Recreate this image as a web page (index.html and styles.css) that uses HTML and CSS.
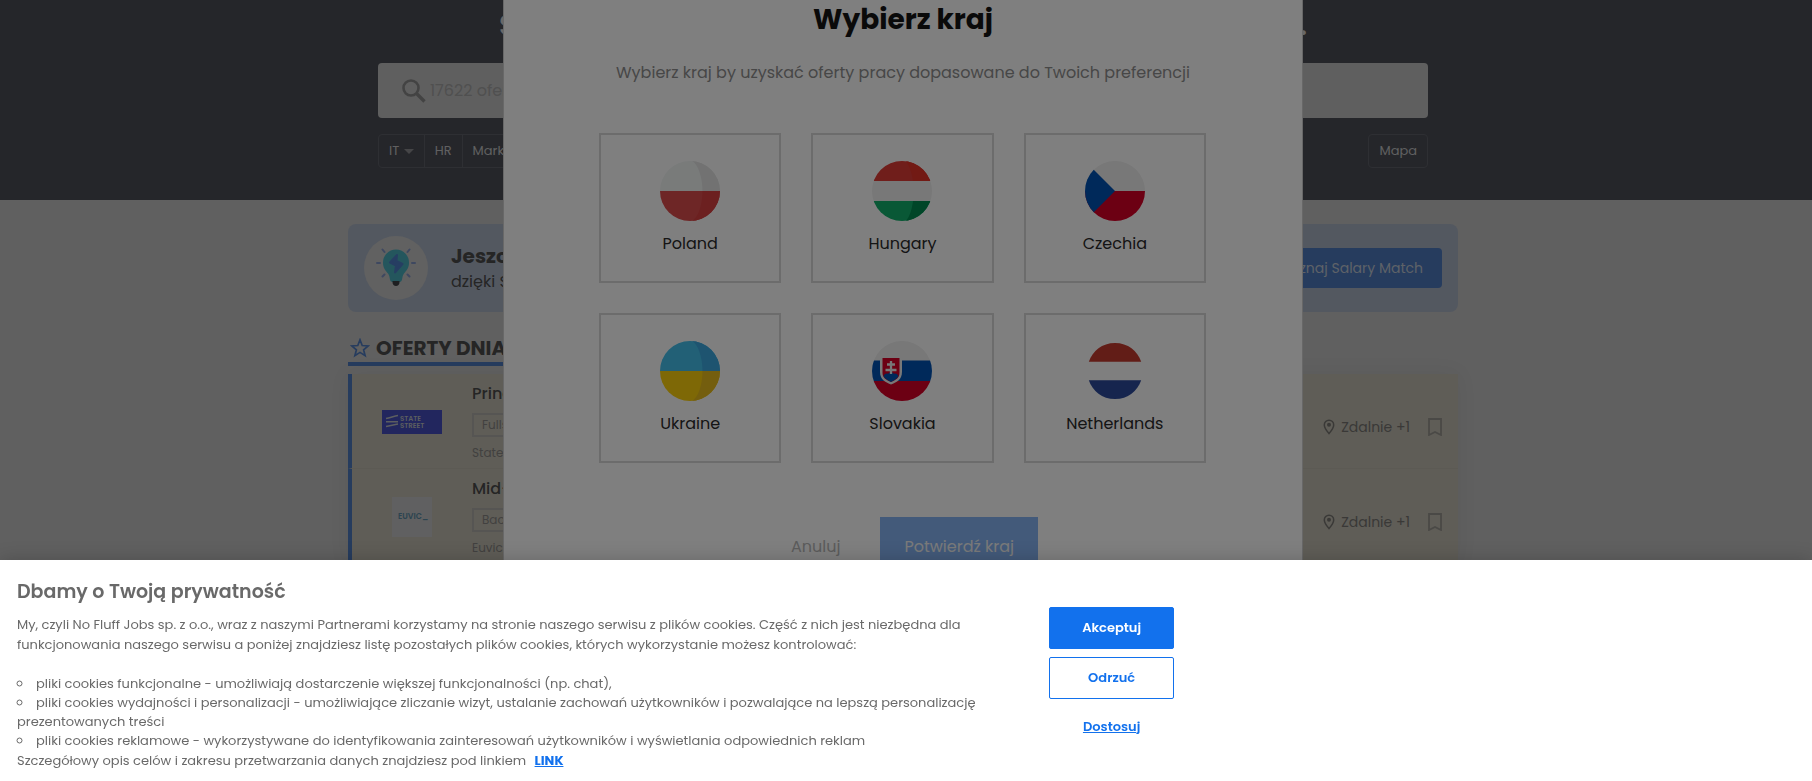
FILE: index.html
```html
<!DOCTYPE html>
<html lang="pl">
<head>
  <meta charset="UTF-8">
  <meta name="viewport" content="width=device-width, initial-scale=1.0">
  <title>No Fluff Jobs</title>
  <link rel="stylesheet" href="styles.css">
</head>
<body>
  <header class="hero">
    <div class="hero-inner">
      <div class="hero-title"><span>S</span><span>.</span></div>
      <div class="search">
        <svg class="search-icon" viewBox="0 0 24 24"><circle cx="9" cy="9" r="7.500" fill="none" stroke="currentColor" stroke-width="2.600"/><path d="M14.500 14.500L22.500 22.500" stroke="currentColor" stroke-width="3.400"/></svg>
        <input type="text" class="search-input" aria-label="Szukaj" placeholder="17622 ofert">
      </div>
      <div class="filters">
        <div class="chips">
          <button class="chip">IT <span class="caret"></span></button>
          <button class="chip">HR</button>
          <button class="chip">Marketing</button>
        </div>
        <button class="map-button">Mapa</button>
      </div>
    </div>
  </header>

  <main class="content">
    <section class="promo">
      <div class="promo-icon">
        <svg width="40" height="40" viewBox="0 0 40 40">
          <g stroke="#7c90c0" stroke-width="2" stroke-linecap="round">
            <path d="M1 15h3M36 15h3M6.500 1.500L8.500 4M33.500 1.500L31.500 4M6.500 28.500L8.500 26.500M33.500 28.500L31.500 26.500"/>
          </g>
          <path d="M20 1.500a13 13 0 0 0-13 13.500c0 5 2.500 7.500 5 10.500 1.500 2 1.500 4 2 6 .3 1.500 1 2.500 2.500 2.500h7c1.500 0 2.200-1 2.500-2.500.5-2 .5-4 2-6 2.500-3 5-5.500 5-10.500A13 13 0 0 0 20 1.500z" fill="#48adbb"/>
          <path d="M16.500 33h7v1c0 2.500-1.500 4-3.500 4s-3.500-1.500-3.500-4z" fill="#3c3e42"/>
          <path d="M21 7l-7 7.500 6 3-1 7 7.500-8.500-6-3z" fill="#4d7cc4" stroke="#4d7cc4" stroke-width="2" stroke-linejoin="round"/>
        </svg>
      </div>
      <div class="promo-text">
        <strong>Jeszcze</strong>
        <span>dzięki Salary</span>
      </div>
      <button class="promo-button">Poznaj Salary Match</button>
    </section>

    <h2 class="section-title">
      <svg width="20" height="20" viewBox="0 0 20 20"><path d="M10 1.800l2.200 5.700 6 .4-4.600 3.900 1.500 5.900L10 14.400l-5.100 3.300 1.500-5.900L1.800 7.900l6-.4z" fill="none" stroke="#4c78bc" stroke-width="1.700"/></svg>
      OFERTY DNIA
    </h2>

    <div class="offers">
      <article class="offer">
        <div class="offer-logo">
          <svg width="60" height="24" viewBox="0 0 60 24">
            <rect width="60" height="24" fill="#444cbc"/>
            <path d="M4 8.500C8 8 12 6 16 5.500M4 11.800h12M4 16.500c4-.5 8-2 12-2.500" stroke="#b8bcc0" stroke-width="1.500" fill="none"/>
            <g class="logo-state"><text x="18" y="11">STATE</text><text x="18" y="18">STREET</text></g>
          </svg>
        </div>
        <div class="offer-info">
          <h3>Principal</h3>
          <span class="tag">Fullstack</span>
          <p>State Street</p>
        </div>
        <div class="offer-place">
          <svg class="pin" viewBox="0 0 12 16"><path d="M6 1.200a4.700 4.700 0 0 0-4.700 4.700C1.300 9 6 14.500 6 14.500S10.700 9 10.700 5.900A4.700 4.700 0 0 0 6 1.200z" fill="none" stroke="currentColor" stroke-width="1.500"/><circle cx="6" cy="5.800" r="2" fill="currentColor"/></svg>
          <span>Zdalnie +1</span>
          <svg class="bookmark" viewBox="0 0 14 18"><path d="M1 1h12v16l-6-3-6 3z" fill="none" stroke="currentColor" stroke-width="1.800"/></svg>
        </div>
      </article>
      <article class="offer">
        <div class="offer-logo">
          <svg width="40" height="40" viewBox="0 0 40 40">
            <rect width="40" height="40" fill="#c0c1c3"/>
            <text class="logo-euvic" x="6" y="22">EUVIC_</text>
          </svg>
        </div>
        <div class="offer-info">
          <h3>Mid-Senior</h3>
          <span class="tag">Backend</span>
          <p>Euvic</p>
        </div>
        <div class="offer-place">
          <svg class="pin" viewBox="0 0 12 16"><path d="M6 1.200a4.700 4.700 0 0 0-4.700 4.700C1.300 9 6 14.500 6 14.500S10.700 9 10.700 5.900A4.700 4.700 0 0 0 6 1.200z" fill="none" stroke="currentColor" stroke-width="1.500"/><circle cx="6" cy="5.800" r="2" fill="currentColor"/></svg>
          <span>Zdalnie +1</span>
          <svg class="bookmark" viewBox="0 0 14 18"><path d="M1 1h12v16l-6-3-6 3z" fill="none" stroke="currentColor" stroke-width="1.800"/></svg>
        </div>
      </article>
    </div>
  </main>

  <div class="modal-wrap">
    <div class="modal" role="dialog" aria-labelledby="modal-title">
      <h2 id="modal-title">Wybierz kraj</h2>
      <p class="modal-lead">Wybierz kraj by uzyskać oferty pracy dopasowane do Twoich preferencji</p>
      <div class="countries">
        <button class="country">
          <svg class="flag" viewBox="0 0 60 60">
            <clipPath id="round"><circle cx="30" cy="30" r="30"/></clipPath>
            <g clip-path="url(#round)"><path fill="#f2f6f5" d="M0 0h60v30H0z"/><path fill="#dc4c4c" d="M0 30h60v30H0z"/><path fill="#e4e4e4" d="M32 0h28v30H42.500C42.500 16 38 3 32 0z"/><path fill="#d84040" d="M42.500 30H60v30H32c6-3 10.500-16 10.500-30z"/></g>
          </svg>
          Poland
        </button>
        <button class="country">
          <svg class="flag" viewBox="0 0 60 60">
            <g clip-path="url(#round)"><path fill="#f0f0f0" d="M0 20h60v20H0z"/><path fill="#e03c36" d="M0 0h60v20H0z"/><path fill="#12b06c" d="M0 40h60v20H0z"/><path fill="#e43428" d="M34 0h26v20H41c-1-8-4-16-7-20z"/><path fill="#008c50" d="M41 40h19v20H34c4-5 6-12 7-20z"/></g>
          </svg>
          Hungary
        </button>
        <button class="country">
          <svg class="flag" viewBox="0 0 60 60">
            <g clip-path="url(#round)"><path fill="#f0f0f0" d="M0 0h60v30H0z"/><path fill="#d80027" d="M0 30h60v30H0z"/><path fill="#0052b4" d="M0 0l30 30L0 60z"/></g>
          </svg>
          Czechia
        </button>
        <button class="country">
          <svg class="flag" viewBox="0 0 60 60">
            <g clip-path="url(#round)"><path fill="#44c0ec" d="M0 0h60v30H0z"/><path fill="#fcd00c" d="M0 30h60v30H0z"/><path fill="#3ca8e0" d="M32 0h28v30H42.500C42.500 16 38 3 32 0z"/><path fill="#e8bc1c" d="M42.500 30H60v30H32c6-3 10.500-16 10.500-30z"/></g>
          </svg>
          Ukraine
        </button>
        <button class="country">
          <svg class="flag" viewBox="0 0 60 60">
            <g clip-path="url(#round)"><path fill="#f0f0f0" d="M0 0h60v20H0z"/><path fill="#0052b4" d="M0 19.500h60V41H0z"/><path fill="#d80027" d="M0 40h60v20H0z"/></g>
            <path fill="#f0f0f0" d="M8 17h22v14c0 8-6 10.500-11 12.500C14 41.500 8 39 8 31z"/>
            <path fill="#d80027" d="M10.500 17h17v15c0 5-4 7-8.500 9-4.500-2-8.500-4-8.500-9z"/>
            <path fill="#0052b4" d="M11.500 35c1-2 3-3 4.500-2 1-2.500 5-2.500 6 0 1.500-1 3.500 0 4.500 2-1.500 3-4.500 4.500-7.500 6-3-1.500-6-3-7.500-6z"/>
            <path stroke="#f0f0f0" stroke-width="2.300" fill="none" d="M19 20v13M15 23.500h8M13.500 29h11"/>
          </svg>
          Slovakia
        </button>
        <button class="country">
          <svg class="flag" viewBox="0 0 60 60">
            <path fill="#c43a2e" d="M3.800 20.800C7.700 9.700 17 2 30 2s22.300 7.700 26.200 18.800z"/><path fill="#2c4a9c" d="M3.800 39.200C7.700 50.300 17 58 30 58s22.300-7.700 26.200-18.800z"/>
          </svg>
          Netherlands
        </button>
      </div>
      <div class="modal-actions">
        <button class="cancel">Anuluj</button>
        <button class="confirm">Potwierdź kraj</button>
      </div>
    </div>
  </div>

  <div class="overlay"></div>

  <section class="cookies">
    <div class="cookies-text">
      <h2>Dbamy o Twoją prywatność</h2>
      <p>My, czyli No Fluff Jobs sp. z o.o., wraz z naszymi Partnerami korzystamy na stronie naszego serwisu z plików cookies. Część z nich jest niezbędna dla funkcjonowania naszego serwisu a poniżej znajdziesz listę pozostałych plików cookies, których wykorzystanie możesz kontrolować:</p>
      <ul>
        <li>pliki cookies funkcjonalne - umożliwiają dostarczenie większej funkcjonalności (np. chat),</li>
        <li>pliki cookies wydajności i personalizacji - umożliwiające zliczanie wizyt, ustalanie zachowań użytkowników i pozwalające na lepszą personalizację prezentowanych treści</li>
        <li>pliki cookies reklamowe - wykorzystywane do identyfikowania zainteresowań użytkowników i wyświetlania odpowiednich reklam</li>
      </ul>
      <p>Szczegółowy opis celów i zakresu przetwarzania danych znajdziesz pod linkiem <a href="#">LINK</a></p>
    </div>
    <div class="cookies-actions">
      <button class="accept">Akceptuj</button>
      <button class="reject">Odrzuć</button>
      <button class="customize">Dostosuj</button>
    </div>
  </section>
</body>
</html>
```
FILE: styles.css
```css
* {
  box-sizing: border-box;
}

body {
  margin: 0;
  height: 100vh;
  overflow: hidden;
  background-color: #c0c0c0;
  color: #4a4a4a;
  font-family: Poppins, Inter, "Open Sans", sans-serif;
  font-size: 16px;
}

h1, h2, h3, p, ul {
  margin: 0;
}

button, input {
  font-family: inherit;
}

button {
  cursor: pointer;
}

/* header */
.hero {
  height: 200px;
  padding-right: 6px;
  background-color: #4a4c54;
}

.hero-inner {
  max-width: 1050px;
  margin: 0 auto;
}

.hero-title {
  display: flex;
  justify-content: space-between;
  max-width: 808px;
  height: 63px;
  margin: 0 auto;
  padding-top: 8px;
  color: #d0d0d0;
  font-size: 28px;
  font-weight: 600;
  line-height: 36px;
}

.search {
  display: flex;
  align-items: center;
  gap: 4px;
  height: 55px;
  padding: 0 24px;
  border-radius: 4px;
  background-color: #bebebe;
}

.search-icon {
  width: 24px;
  height: 24px;
  color: #868686;
}

.search-input {
  flex: 1;
  padding: 0;
  border: none;
  background: none;
  font-size: 16px;
}

.search-input::placeholder {
  color: #a0a0a0;
}

.filters {
  display: flex;
  justify-content: space-between;
  margin-top: 16px;
}

.chips {
  display: flex;
}

.chip, .map-button {
  height: 34px;
  padding: 0 10px;
  border: 1px solid #5c5e66;
  background: none;
  color: #c0c0c2;
  font-size: 13px;
}

.chip {
  margin-right: -1px;
}

.chip:first-child {
  border-radius: 4px 0 0 4px;
}

.caret {
  display: inline-block;
  margin-left: 1px;
  border: 5px solid transparent;
  border-top-color: #8a8a8e;
  border-bottom: none;
  vertical-align: middle;
}

.map-button {
  border-radius: 4px;
}

/* listing */
.content {
  max-width: 1116px;
  margin: 0 auto;
  padding: 24px 6px 0 0;
}

.promo {
  display: flex;
  align-items: center;
  height: 88px;
  padding: 0 16px;
  border-radius: 8px;
  background-color: #a6b0c0;
}

.promo-icon {
  display: flex;
  align-items: center;
  justify-content: center;
  width: 64px;
  height: 64px;
  border-radius: 50%;
  background-color: #c2c2c2;
}

.promo-text {
  display: flex;
  flex: 1;
  flex-direction: column;
  margin-left: 23px;
  padding-top: 2px;
  line-height: 25px;
}

.promo-text strong {
  font-size: 20px;
}

.promo-button {
  height: 40px;
  padding: 0 19px;
  border: none;
  border-radius: 4px;
  background-color: #4c78bc;
  color: #bcc4d0;
  font-size: 14px;
}

.section-title {
  display: flex;
  align-items: center;
  gap: 6px;
  width: max-content;
  height: 42px;
  margin-top: 12px;
  padding: 10px 2px 0;
  border-bottom: 4px solid #4c78bc;
  font-size: 20px;
  line-height: 20px;
}

.offers {
  margin-top: 8px;
  box-shadow: 0 0 20px rgba(0, 0, 0, 0.06);
}

.offer {
  display: flex;
  align-items: center;
  height: 95px;
  padding-top: 2px;
  border-left: 4px solid #4c78bc;
  border-bottom: 1px solid #b8b4a8;
  background-color: #bebaae;
}

.offer-logo {
  display: flex;
  justify-content: center;
  width: 120px;
}

.offer-logo svg {
  display: block;
}

.logo-state {
  fill: #b8bcc0;
  font-size: 7px;
  font-weight: 600;
}

.logo-euvic {
  fill: #5888a0;
  font-size: 8px;
  font-weight: 600;
}

.offer-info {
  flex: 1;
}

.offer-info h3 {
  font-size: 16px;
  font-weight: 500;
  line-height: 24px;
}

.tag {
  display: inline-block;
  margin: 7px 0 6px;
  padding: 0 8px;
  border: 2px solid #acaaa6;
  color: #848280;
  font-size: 12px;
  line-height: 20px;
}

.offer-info p {
  color: #848280;
  font-size: 12px;
  line-height: 20px;
}

.offer-place {
  display: flex;
  align-items: center;
  padding: 10px 16px 0 0;
  color: #74726e;
  font-size: 14px;
}

.pin {
  width: 12px;
  height: 16px;
  margin-right: 6px;
}

.bookmark {
  width: 14px;
  height: 18px;
  margin-left: 18px;
  color: #94928c;
}

/* country picker */
.modal-wrap {
  position: absolute;
  inset: 0 6px 0 0;
  display: flex;
  justify-content: center;
}

.modal {
  width: 800px;
  height: 100%;
  border: 1px solid #d0d0d0;
  border-width: 0 1px;
  background-color: #fff;
  text-align: center;
}

.modal h2 {
  color: #141414;
  font-size: 28px;
  font-weight: 700;
  line-height: 40px;
}

.modal-lead {
  margin-top: 21px;
  color: #8e8e8e;
  line-height: 24px;
}

.countries {
  display: grid;
  grid-template-columns: repeat(3, 1fr);
  gap: 30px;
  margin: 48px 96px 0 95px;
}

.country {
  display: flex;
  flex-direction: column;
  align-items: center;
  gap: 11px;
  height: 150px;
  padding: 26px 0 0;
  border: 2px solid #d8d8d8;
  background: none;
  color: #2a2a2a;
  font-size: 16px;
  line-height: 24px;
}

.flag {
  width: 60px;
  height: 60px;
}

.modal-actions {
  display: flex;
  justify-content: center;
  gap: 16px;
  margin-top: 54px;
  padding-right: 1px;
}

.modal-actions button {
  height: 58px;
  padding: 0 24px;
  border: none;
  font-size: 16px;
}

.cancel {
  background: none;
  color: #b8b8b8;
}

.confirm {
  background-color: #86b4f4;
  color: #f4f4f4;
}

.overlay {
  position: fixed;
  inset: 0;
  background-color: rgba(0, 0, 0, 0.5);
}

/* cookie consent */
.cookies {
  position: fixed;
  right: 0;
  bottom: 0;
  left: 0;
  display: flex;
  align-items: flex-start;
  gap: 72px;
  padding: 19px 17px 10px;
  background-color: #fff;
  box-shadow: 0 0 18px rgba(0, 0, 0, 0.2);
  color: #696969;
  font-size: 13px;
  line-height: 20px;
}

.cookies-text {
  width: 54%;
}

.cookies-text h2 {
  margin-bottom: 10px;
  font-size: 19px;
  font-weight: 600;
  line-height: 26px;
}

.cookies-text ul {
  margin: 19px 0 1px;
  padding: 0;
  line-height: 19px;
  list-style: circle inside;
}

.cookies-text a {
  margin-left: 5px;
  color: #1271ed;
  font-weight: 700;
}

.cookies-actions {
  display: flex;
  flex-direction: column;
  gap: 8px;
  width: 125px;
  margin-top: 28px;
}

.cookies-actions button {
  height: 42px;
  border: 1px solid #1271ed;
  border-radius: 2px;
  background-color: #fff;
  color: #1271ed;
  font-size: 13px;
  font-weight: 600;
}

.cookies-actions .accept {
  background-color: #1271ed;
  color: #fff;
}

.cookies-actions .customize {
  height: 40px;
  border: none;
  text-decoration: underline;
}
```
